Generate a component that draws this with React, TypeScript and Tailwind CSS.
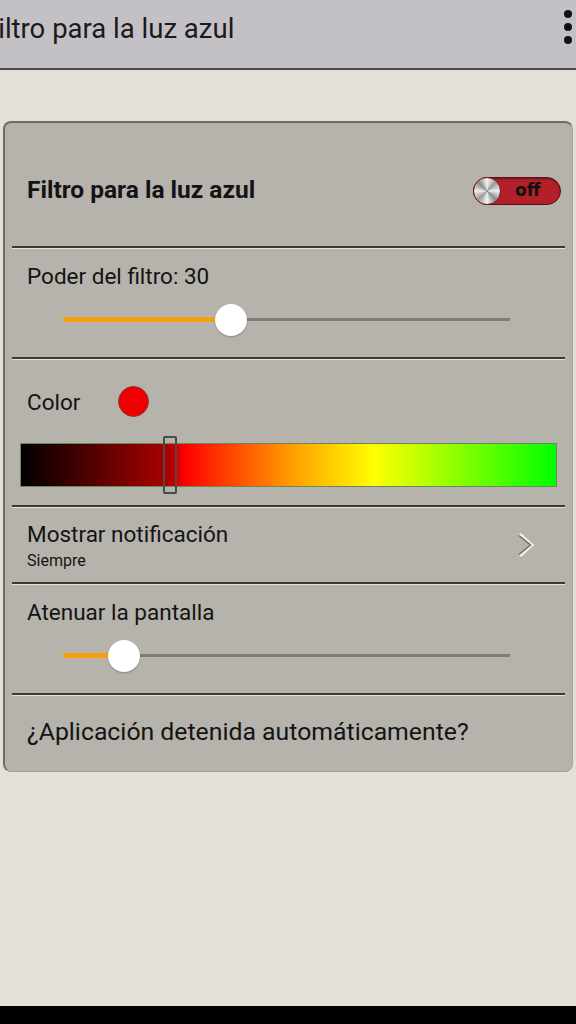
import React from "react";

const font = { fontFamily: "Roboto, 'Noto Sans', sans-serif" };

function Divider() {
  return (
    <div className="mx-[7px] flex flex-col">
      <div className="h-[2px] bg-[#3b3a38]" />
      <div className="h-[1px] bg-[#e6e3de]" />
    </div>
  );
}

function Slider({ pct }: { pct: number }) {
  return (
    <div className="relative ml-[58px] mr-[62px] h-[32px]">
      <div className="absolute left-0 right-0 top-[14px] h-[3px] bg-[#7f7c78]" />
      <div className="absolute left-0 top-[13px] h-[5px] bg-[#f7a00e]" style={{ width: `${pct}%` }} />
      <div
        className="absolute top-0 h-[32px] w-[32px] -translate-x-1/2 rounded-full bg-white shadow-[0_1px_2px_rgba(0,0,0,0.25)]"
        style={{ left: `${pct}%` }}
      />
    </div>
  );
}

export default function App() {
  return (
    <div className="flex min-h-[1024px] w-[576px] flex-col bg-[#e3e0d7] text-[#141414]" style={font}>
      <div className="relative flex h-[68px] items-center overflow-hidden bg-[#c3c1c5] pb-[10px]">
        <span className="ml-[-17px] whitespace-nowrap text-[27.5px] text-[#1a1a1a]">Filtro para la luz azul</span>
        <div className="absolute right-[4px] top-[10px] flex flex-col gap-[5px]">
          <div className="h-[8px] w-[8px] rounded-full bg-[#111]" />
          <div className="h-[8px] w-[8px] rounded-full bg-[#111]" />
          <div className="h-[8px] w-[8px] rounded-full bg-[#111]" />
        </div>
      </div>
      <div className="h-[2px] bg-[#4a4948]" />

      <div className="mx-[3px] mt-[51px] flex flex-col overflow-hidden rounded-[8px] border-l-[2px] border-t-[2px] border-r border-b border-l-[#6f6c68] border-t-[#6f6c68] border-r-[#a8a49e] border-b-[#a29e98] bg-[#b6b2ac]">
        {/* Row 1 */}
        <div className="flex h-[123px] items-center justify-between pl-[22px] pr-[11px] pt-[12px]">
          <span className="text-[24.5px] font-bold">Filtro para la luz azul</span>
          <div className="relative flex h-[28px] w-[88px] items-center rounded-full border border-[#5a1016] bg-[#b3202a] shadow-[inset_0_1px_2px_rgba(0,0,0,0.4)]">
            <div className="ml-[-1px] h-[28px] w-[28px] rounded-full border border-[#7a1a1a] bg-[conic-gradient(from_0deg,#f4f4f4,#9a9a9a,#eeeeee,#8c8c8c,#f4f4f4,#9a9a9a,#eeeeee,#8c8c8c,#f4f4f4)]" />
            <span className="ml-[14px] text-[17px] font-bold leading-none text-[#111]" style={{ fontFamily: "'DejaVu Sans', sans-serif" }}>off</span>
          </div>
        </div>
        <Divider />

        {/* Row 2 */}
        <div className="flex h-[108px] flex-col pt-[13px]">
          <span className="pl-[22px] text-[22.5px] leading-[28px]">Poder del filtro: 30</span>
          <div className="mt-[14px]">
            <Slider pct={37.6} />
          </div>
        </div>
        <Divider />

        {/* Row 3 */}
        <div className="flex h-[145px] flex-col">
          <div className="flex items-center pl-[22px] pt-[26px]">
            <span className="text-[22.5px] leading-[28px]">Color</span>
            <div className="ml-[38px] h-[31px] w-[31px] rounded-full border border-[#8a3a3a] bg-[#ee0000]" />
          </div>
          <div className="relative mx-[15px] mt-[26px] h-[44px] border border-[#6a8a5a] bg-[linear-gradient(to_right,#000000_0%,#b00000_28%,#ff0000_30.5%,#ff9900_50%,#ffff00_66%,#88ff00_82%,#00ff00_100%)]">
            <div className="absolute left-[142px] top-[-8px] h-[58px] w-[14px] rounded-[2px] border-[2px] border-[#4a4a4a]" />
          </div>
        </div>
        <Divider />

        {/* Row 4 */}
        <div className="flex h-[74px] items-center justify-between pl-[22px] pr-[36px]">
          <div className="flex flex-col">
            <span className="text-[22.5px] leading-[28px]">Mostrar notificación</span>
            <span className="mt-[3px] text-[16px] leading-[20px]">Siempre</span>
          </div>
          <svg width="20" height="28" viewBox="0 0 20 28">
            <path d="M4 3 L16 14 L4 25" fill="none" stroke="#f2f0ec" strokeWidth="3" />
            <path d="M3 4.5 L14.5 14 L3 23.5" fill="none" stroke="#6f6c68" strokeWidth="1.5" />
          </svg>
        </div>
        <Divider />

        {/* Row 5 */}
        <div className="flex h-[108px] flex-col pt-[13px]">
          <span className="pl-[22px] text-[22.5px] leading-[28px]">Atenuar la pantalla</span>
          <div className="mt-[14px]">
            <Slider pct={13.6} />
          </div>
        </div>
        <Divider />

        {/* Row 6 */}
        <div className="flex h-[75px] items-center pb-[4px] pl-[22px]">
          <span className="text-[24.8px] leading-[30px]">¿Aplicación detenida automáticamente?</span>
        </div>
      </div>

      <div className="flex-1" />
      <div className="h-[18px] bg-black" />
    </div>
  );
}
